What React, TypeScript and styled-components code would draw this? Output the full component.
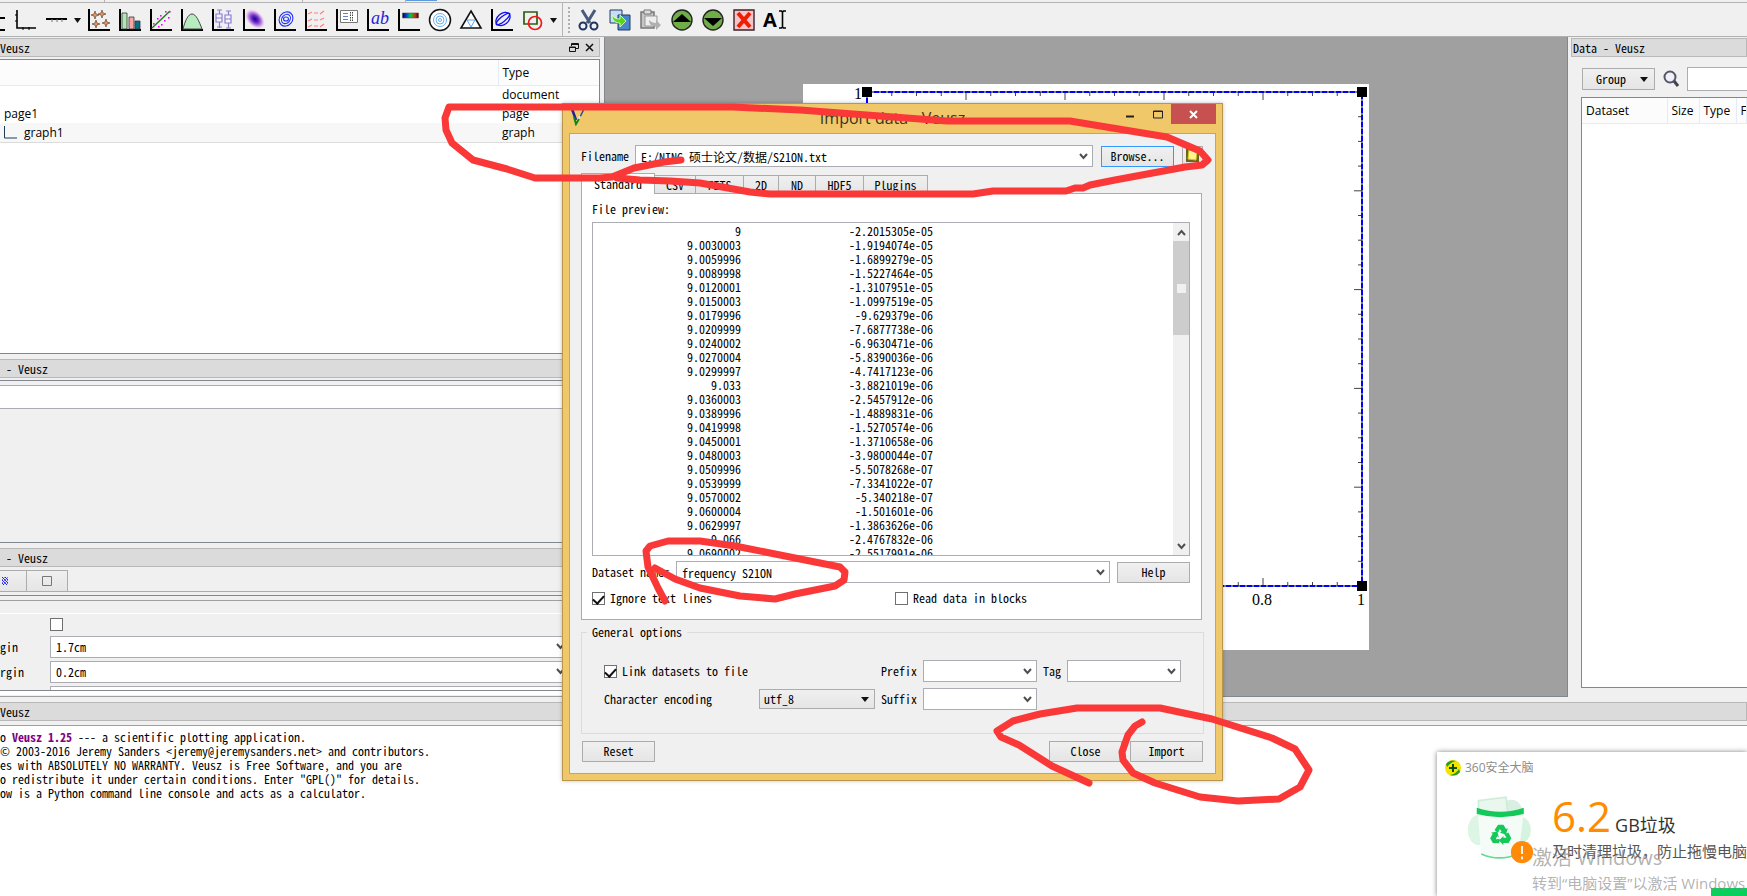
import React from "react";
import styled, { createGlobalStyle } from "styled-components";

const mono = `"Noto Sans Mono CJK SC", "Liberation Mono", "Noto Sans CJK SC", monospace`;
const sans = `"Open Sans", "Noto Sans CJK SC", sans-serif`;

const GlobalStyle = createGlobalStyle`
  * { box-sizing: border-box; }
  body { margin: 0; background: #f0f0f0; overflow: hidden; }
  button, input, select, textarea { font: inherit; color: inherit; margin: 0; }
`;

const Desktop = styled.div`
  position: relative;
  display: flex;
  flex-direction: column;
  height: 100vh;
  overflow: hidden;
  background: #f0f0f0;
  color: #000;
  font: 12px/14px ${mono};
`;

/* ---------- toolbar ---------- */

const MenuEdge = styled.div`
  display: flex;
  height: 3px;
  border-bottom: 1px solid #b4b4b4;
`;
const MenuSegment = styled.span<{ $w: number; $active?: boolean }>`
  width: ${(p) => p.$w}px;
  height: ${(p) => (p.$active ? 1 : 2)}px;
  border-right: 1px solid ${(p) => (p.$active ? "transparent" : "#b4b4b4")};
  background: ${(p) => (p.$active ? "#5a9be0" : "transparent")};
`;
const ToolBar = styled.div`
  display: flex;
  align-items: center;
  height: 34px;
  border-bottom: 1px solid #b0b0b0;
`;
const ToolGroup = styled.div<{ $w?: number }>`
  display: flex;
  align-items: center;
  width: ${(p) => (p.$w ? `${p.$w}px` : "auto")};
  height: 33px;
  padding-left: ${(p) => (p.$w ? 0 : 8)}px;
  border-right: ${(p) => (p.$w ? "1px solid #b4b4b4" : "none")};
`;
const ToolButton = styled.button<{ $w?: number }>`
  flex: none;
  display: flex;
  width: ${(p) => p.$w ?? 31}px;
  height: 24px;
  padding: 1px 0;
  border: 0;
  background: none;
  svg { flex: none; overflow: visible; }
`;
const Grip = styled.span`
  width: 2px;
  height: 26px;
  margin-left: 5px;
  background: repeating-linear-gradient(#b0b0b0 0 2px, transparent 2px 4px);
`;

/* ---------- main area ---------- */

const Main = styled.div`
  flex: 1;
  min-height: 0;
  display: flex;
  padding-bottom: 5px;
`;
const LeftColumn = styled.div`
  flex: none;
  display: flex;
  flex-direction: column;
  width: 600px;
  padding-top: 1px;
`;
const DockTitle = styled.div<{ $inset?: number }>`
  flex: none;
  display: flex;
  align-items: center;
  justify-content: space-between;
  height: 19px;
  padding: 0 4px 0 ${(p) => p.$inset ?? 0}px;
  border: 1px solid #b8b8b8;
  border-left-width: ${(p) => (p.$inset === 1 ? 1 : 0)}px;
  background: #dbdbdb;
  white-space: pre;
`;
const DockButtons = styled.span`
  display: flex;
  gap: 6px;
`;
const TinyButton = styled.button`
  display: flex;
  padding: 0;
  border: 0;
  background: none;
`;
const TreeFrame = styled.div`
  flex: 293 1 0;
  margin: 2px 0 5px;
  border: 1px solid #828790;
  border-left: 0;
  background: #fff;
  font: 12px/18px ${sans};
`;
const Tree = styled.table`
  width: 100%;
  border-collapse: collapse;
  table-layout: fixed;
  th { height: 25px; padding: 1px 4px 0; text-align: left; font-weight: 400; background: #fcfcfc;
       border-bottom: 1px solid #e3edf9; }
  th + th { border-left: 1px solid #e3edf9; }
  td { height: 19px; padding: 0 4px; }
  td:first-child { width: 498px; }
`;
const TreeRow = styled.tr<{ $on?: boolean }>`
  td {
    background: ${(p) => (p.$on ? "#f7f7f7" : "transparent")};
    border-top: 1px solid ${(p) => (p.$on ? "#dcdcdc" : "transparent")};
    border-bottom: 1px solid ${(p) => (p.$on ? "#dcdcdc" : "transparent")};
  }
`;
const TreeLabel = styled.span`
  display: flex;
  align-items: center;
  gap: 7px;
`;
const PropFrame = styled.div`
  flex: 157 1 0;
  margin: 2px 0 5px;
  padding-top: 4px;
  border: 1px solid #828790;
  border-left: 0;
`;
const PlainInput = styled.input`
  display: block;
  width: 100%;
  height: 24px;
  border: 1px solid #abadb3;
  border-left: 0;
  background: #fff;
`;
const FormatFrame = styled.div`
  flex: 126 1 0;
  min-height: 0;
  display: flex;
  flex-direction: column;
  padding-top: 3px;
  border-bottom: 1px solid #a0a0a0;
`;
const SmallTabs = styled.div`
  display: flex;
  height: 22px;
  border-bottom: 1px solid #acacac;
`;
const SmallTab = styled.button<{ $w: number }>`
  display: flex;
  align-items: center;
  justify-content: center;
  width: ${(p) => p.$w}px;
  padding: 0;
  border: 1px solid #acacac;
  border-width: 1px 1px 0 0;
  background: linear-gradient(#f0f0f0, #e5e5e5);
`;
const SettingsFrame = styled.div`
  flex: 1;
  min-height: 0;
  margin: 3px 0 5px;
  padding-top: 4px;
  overflow: hidden;
  border: 1px solid #828790;
  border-left: 0;
  box-shadow: 0 4px 0 #fff;
`;
const SettingsHead = styled.div`
  height: 14px;
  border-top: 1px solid #a0a0a0;
  border-bottom: 1px solid #fff;
`;
const SettingsRow = styled.div<{ $h?: number }>`
  display: grid;
  grid-template-columns: 50px 1fr;
  align-items: center;
  height: ${(p) => p.$h ?? 25}px;
`;

const CanvasArea = styled.div`
  flex: 1;
  min-width: 0;
  display: flex;
  align-items: center;
  justify-content: center;
  margin: 0 0 0 4px;
  border: 1px solid #828790;
  border-top-width: 0;
  background: #a0a0a0;
`;
const Chart = styled.svg`
  flex: none;
  display: block;
  background: #fff;
`;

const DataDock = styled.div`
  flex: none;
  display: flex;
  flex-direction: column;
  width: 176px;
  margin-left: 3px;
  padding-top: 1px;
  overflow: hidden;
`;
const DataTools = styled.div`
  display: flex;
  align-items: center;
  gap: 8px;
  height: 24px;
  margin: 10px 0 6px 11px;
`;
const GroupButton = styled.button`
  flex: none;
  display: flex;
  align-items: center;
  justify-content: space-between;
  width: 73px;
  height: 22px;
  padding: 0 5px 0 13px;
  border: 1px solid #acacac;
  background: linear-gradient(#f0f0f0, #e5e5e5);
`;
const SearchInput = styled.input`
  flex: 1;
  min-width: 0;
  height: 24px;
  border: 1px solid #abadb3;
  border-right: 0;
  background: #fff;
`;
const DataFrame = styled.div`
  flex: 1;
  margin: 0 0 9px 10px;
  border: 1px solid #828790;
  border-right: 0;
  background: #fff;
  font: 12px/18px ${sans};
`;
const DataTable = styled.table`
  width: 165px;
  border-collapse: collapse;
  table-layout: fixed;
  th { height: 25px; padding: 1px 4px 0; text-align: left; font-weight: 400; white-space: nowrap; overflow: hidden;
       background: #fcfcfc; border: 1px solid #e3edf9; border-width: 0 1px 1px 0; }
`;

/* ---------- console ---------- */

const ConsoleDock = styled.div`
  flex: none;
  height: 194px;
  display: flex;
  flex-direction: column;
`;
const ConsoleText = styled.pre`
  flex: 1;
  margin: 4px 0 0;
  padding: 4px 0;
  border-top: 1px solid #a0a0a0;
  background: #fff;
  font: 12px/14px ${mono};
  b { color: #800080; }
`;

/* ---------- dialog ---------- */

const Dialog = styled.section`
  position: absolute;
  isolation: isolate;
  left: 562px;
  top: 103px;
  width: 661px;
  padding: 0 6px 6px;
  border: 1px solid #b8964c;
  background: #f0c869;
  box-shadow: 0 0 4px rgba(0, 0, 0, 0.25);
`;
const TitleBar = styled.header`
  display: grid;
  grid-template-columns: 126px 1fr 126px;
  height: 29px;
`;
const DialogTitle = styled.h1`
  margin: 0;
  color: #3a3424;
  font: 400 16px/28px ${sans};
  text-align: center;
`;
const WindowButtons = styled.div`
  display: flex;
  justify-content: flex-end;
`;
const WindowButton = styled.button<{ $close?: boolean }>`
  display: flex;
  align-items: center;
  justify-content: center;
  width: ${(p) => (p.$close ? 45 : 27)}px;
  height: 20px;
  padding: 0;
  border: 0;
  background: ${(p) => (p.$close ? "#c75050" : "transparent")};
`;
const Body = styled.div`
  padding: 11px;
  border: 1px solid #c8a656;
  background: #f0f0f0;
`;
const FileRow = styled.div`
  display: flex;
  align-items: center;
  gap: 8px;
  height: 22px;
  padding-right: 1px;
  label { width: 46px; white-space: nowrap; }
`;
const ComboFrame = styled.span<{ $w?: number }>`
  flex: ${(p) => (p.$w ? "none" : "1")};
  display: flex;
  align-items: center;
  width: ${(p) => (p.$w ? `${p.$w}px` : "auto")};
  height: 22px;
  padding: 0 4px 0 5px;
  border: 1px solid #abadb3;
  background: #fff;
  input {
    flex: 1;
    min-width: 0;
    height: 20px;
    padding: 0;
    border: 0;
    outline: 0;
    background: none;
  }
`;
const PushButton = styled.button<{ $focus?: boolean; $square?: boolean }>`
  flex: none;
  display: flex;
  align-items: center;
  justify-content: center;
  width: ${(p) => (p.$square ? 21 : 73)}px;
  height: 21px;
  padding: 0 0 1px;
  border: 1px solid ${(p) => (p.$focus ? "#3399ff" : "#acacac")};
  background: linear-gradient(#f0f0f0, #e5e5e5);
`;
const Tabs = styled.div`
  display: flex;
  align-items: flex-end;
  height: 20px;
  margin-top: 6px;
`;
const Tab = styled.button<{ $w: number; $on?: boolean }>`
  position: relative;
  z-index: ${(p) => (p.$on ? 1 : 0)};
  width: ${(p) => p.$w}px;
  height: ${(p) => (p.$on ? 21 : 18)}px;
  margin-bottom: ${(p) => (p.$on ? -1 : 0)}px;
  padding: 0;
  border: 1px solid #acacac;
  border-bottom: 0;
  border-left-width: ${(p) => (p.$on ? 1 : 0)}px;
  background: ${(p) => (p.$on ? "#fff" : "linear-gradient(#f0f0f0, #e5e5e5)")};
`;
const Pane = styled.div`
  margin-right: 2px;
  height: 427px;
  padding: 8px 11px 11px 10px;
  border: 1px solid #acacac;
  background: #fff;
`;
const Preview = styled.div`
  display: flex;
  height: 334px;
  margin: 6px 0 5px;
  border: 1px solid #abadb3;
`;
const PreviewText = styled.div`
  flex: 1;
  overflow: hidden;
  padding-top: 1px;
`;
const Numbers = styled.table`
  border-collapse: collapse;
  td { height: 14px; padding: 0; text-align: right; line-height: 14px; }
  td:first-child { width: 148px; }
  td:last-child { width: 192px; }
`;
const ScrollBar = styled.div`
  display: flex;
  flex-direction: column;
  align-items: center;
  width: 16px;
  background: #f0f0f0;
`;
const ScrollArrow = styled.span`
  display: flex;
  align-items: center;
  justify-content: center;
  height: 18px;
`;
const ScrollThumb = styled.span`
  display: flex;
  align-items: center;
  justify-content: center;
  width: 16px;
  height: 94px;
  margin-bottom: auto;
  background: #cdcdcd;
  &::after { content: ""; width: 9px; height: 9px; background: #f0f0f0; }
`;
const DatasetRow = styled.div`
  display: grid;
  grid-template-columns: 77px 1fr 73px;
  align-items: center;
  column-gap: 7px;
  white-space: nowrap;
`;
const CheckRow = styled.div`
  display: grid;
  grid-template-columns: 303px 1fr;
  margin-top: 8px;
`;
const CheckLabel = styled.label<{ $wide?: boolean }>`
  display: flex;
  align-items: center;
  gap: 5px;
  grid-column: ${(p) => (p.$wide ? "span 2" : "auto")};
`;
const Check = styled.input`
  appearance: none;
  flex: none;
  display: flex;
  justify-content: center;
  width: 13px;
  height: 13px;
  border: 1px solid #707070;
  background: #fff;
  &:checked::after {
    content: "";
    width: 5px;
    height: 9px;
    border: solid #111;
    border-width: 0 2px 2px 0;
    transform: rotate(42deg);
  }
`;
const Options = styled.fieldset`
  height: 109px;
  min-width: 0;
  margin: 5px 0 0;
  padding: 18px 22px 0 22px;
  border: 1px solid #dcdcdc;
  legend { margin-left: -17px; padding: 0 5px; }
`;
const OptionRow = styled.div`
  display: grid;
  grid-template-columns: 149px 116px 36px 114px 18px 114px;
  align-items: center;
  column-gap: 6px;
  height: 28px;
`;
const SelectFrame = styled.span`
  position: relative;
  display: flex;
  align-items: center;
  svg { position: absolute; right: 5px; pointer-events: none; }
`;
const FlatSelect = styled.select`
  appearance: none;
  width: 100%;
  height: 20px;
  padding: 0 4px;
  border: 1px solid #acacac;
  border-radius: 0;
  background: linear-gradient(#f0f0f0, #e5e5e5);
`;
const Footer = styled.div`
  display: flex;
  gap: 8px;
  margin: 7px 1px 0;
  button:first-child { margin-right: auto; }
`;

/* ---------- notification ---------- */

const Notice = styled.aside`
  position: absolute;
  left: 1437px;
  right: 0;
  top: 752px;
  bottom: 0;
  overflow: hidden;
  background: #fff;
  box-shadow: 0 0 5px rgba(0, 0, 0, 0.5);
  font-family: ${sans};
  white-space: nowrap;
`;
const NoticeHead = styled.div`
  display: flex;
  align-items: center;
  gap: 4px;
  padding: 8px 8px 0;
  color: #8c8c8c;
  font-size: 12px;
  line-height: 16px;
`;
const NoticeBody = styled.div`
  display: flex;
  gap: 14px;
  padding: 12px 0 0 30px;
`;
const Amount = styled.p`
  display: flex;
  align-items: baseline;
  gap: 4px;
  margin: 0;
  color: #333;
  font-size: 18px;
  line-height: 56px;
  strong { color: #ff8c00; font-weight: 400; font-size: 42px; }
`;
const Advice = styled.p`
  margin: -13px 0 0;
  color: #555;
  font-size: 15px;
  line-height: 22px;
`;
const CleanButton = styled.button`
  position: absolute;
  left: 274px;
  top: 136px;
  width: 90px;
  height: 28px;
  border: 0;
  background: #0bcf5c;
`;
const Watermark = styled.div`
  position: absolute;
  left: 1532px;
  top: 843px;
  color: rgba(130, 130, 130, 0.62);
  font: 15px/20px ${sans};
  white-space: nowrap;
  strong { display: block; font-weight: 400; font-size: 20px; line-height: 30px; }
`;
const Marker = styled.svg`
  position: absolute;
  left: 0;
  top: 0;
  pointer-events: none;
`;

/* ---------- icons ---------- */

const frame = <path d="M1 0V21H22" fill="none" stroke="#000" strokeWidth="2" />;
const star = "M0-4L1-1L4 0L1 1L0 4L-1 1L-4 0L-1-1Z";

const plotIcons: [string, React.ReactNode][] = [
  ["Points", <>{frame}{[[7, 6], [14, 5], [8, 15], [18, 14]].map(([x, y]) => (
    <path key={x} d={star} transform={`translate(${x} ${y})`} fill="#e8905c" stroke="#6a4a3c" strokeWidth=".7" />))}</>],
  ["Bars", <>{frame}<g stroke="#333" strokeWidth=".8"><path d="M3 4h5v16H3z" fill="#b4e6b4" /><path d="M10 8h5v12h-5z" fill="#f9a6a6" /><path d="M16 12h5v8h-5z" fill="#0a6f86" /></g></>],
  ["Fit", <>{frame}<path d="M2 19L20 2" stroke="#1d7d1d" strokeWidth="1.4" />{[[3, 14], [7, 9], [10, 6], [15, 2], [8, 17], [11, 15], [14, 11], [18, 8], [19, 2]].map(([x, y]) => (
    <rect key={`${x}-${y}`} x={x} y={y} width="1.600" height="1.600" fill="#f0f" />))}</>],
  ["Function", <>{frame}<path d="M2 20C4 12 7 5 11 5s7 7 10 15z" fill="#b9ebc0" stroke="#444" /></>],
  ["Boxplot", <>{frame}<g fill="#f4f2ff" stroke="#8a7fd0" strokeWidth="1.2"><path d="M5 1h5M7.500 1v18M5 18h5M14 2h5M16.500 2v17M14 19h5" /><path d="M4 5h6v8H4zM13 6h6v8h-6zM4 9h6M13 10h6" /></g></>],
  ["Image", <>{frame}<defs><radialGradient id="blob"><stop offset="0" stopColor="#1a0099" /><stop offset=".35" stopColor="#6a2cc4" /><stop offset=".7" stopColor="#cf9be8" /><stop offset="1" stopColor="#f0dcf8" stopOpacity="0" /></radialGradient></defs><ellipse cx="12" cy="10" rx="12" ry="8" transform="rotate(45 12 10)" fill="url(#blob)" /></>],
  ["Contour", <>{frame}<g fill="none" stroke="#2030ff" strokeWidth="1.1"><ellipse cx="12" cy="10" rx="7.500" ry="6.500" transform="rotate(-50 12 10)" /><ellipse cx="12" cy="10" rx="5" ry="4" transform="rotate(-50 12 10)" /><ellipse cx="12" cy="10" rx="2.500" ry="2" /></g></>],
  ["Vector field", <>{frame}<path d="M3 5l4-2M9 4h4M15 5l4-3M3 12l4-2M9 11h4M15 11l4-2M3 18l4-2M9 17h4M15 18l4-3" stroke="#ff8080" strokeWidth="1.2" /></>],
  ["Key", <>{frame}<path d="M4.500 1.500h17v12h-17z" fill="#fff" stroke="#777" /><path d="M7 4.500h5M7 7.500h5M7 10.500h5" stroke="#6080d0" /><path d="M14.500 3v9M16.500 3v9" stroke="#444" strokeDasharray="1.500 1" /></>],
  ["Label", <>{frame}<text x="4" y="15" fill="#2a20d8" fontFamily="Liberation Serif, serif" fontStyle="italic" fontSize="18">ab</text></>],
  ["Colorbar", <>{frame}<defs><linearGradient id="rain"><stop offset="0" stopColor="#003" /><stop offset=".25" stopColor="#04d" /><stop offset=".5" stopColor="#0c4" /><stop offset=".8" stopColor="#d20" /><stop offset="1" stopColor="#300" /></linearGradient></defs><path d="M4.500 4h16v5h-16z" fill="url(#rain)" stroke="#555" strokeWidth=".6" /></>],
  ["Polar", <g fill="none"><circle cx="11" cy="11" r="10.500" fill="#fff" stroke="#111" strokeWidth="1.500" /><g stroke="#6bb0ee"><circle cx="11" cy="11" r="6.500" /><circle cx="11" cy="11" r="4" /><circle cx="11" cy="11" r="1.500" /></g></g>],
  ["Ternary", <g fill="none"><path d="M11 2L21 19H1z" fill="#fff" stroke="#111" strokeWidth="1.600" /><path d="M7 11h8l-4 7z" stroke="#5aa0f0" /></g>],
  ["Covariance", <>{frame}<g fill="none" stroke="#1010f0" strokeWidth="1.300"><ellipse cx="12" cy="10" rx="8" ry="5.500" transform="rotate(-40 12 10)" /><ellipse cx="12" cy="10" rx="8.500" ry="2.500" transform="rotate(-40 12 10)" /></g></>],
  ["Shape", <g fill="none" strokeWidth="1.700"><path d="M2 3h13v12H2z" stroke="#286010" /><circle cx="13" cy="14" r="6.500" stroke="#f01818" /></g>],
];

const editIcons: [string, React.ReactNode][] = [
  ["Cut", <g fill="none"><path d="M4 1l8 13M17 1L9 14" stroke="#47597c" strokeWidth="3" /><circle cx="5" cy="17" r="3.500" stroke="#1e3560" strokeWidth="2" /><circle cx="16" cy="17" r="3.500" stroke="#1e3560" strokeWidth="2" /></g>],
  ["Copy", <><path d="M1 1h12v13H1z" fill="#c9dcf2" stroke="#1f3c68" /><path d="M9 6h12v15H9z" fill="#4a86c8" stroke="#1f3c68" /><path d="M3 6c0 6 4 8 8 8v4l6-6-6-6v4c-4 0-6-1-8-4z" fill="#56d618" stroke="#e8ffe0" strokeWidth=".8" /></>],
  ["Paste", <><path d="M1 3h13v16H1z" fill="#c4c4c4" stroke="#777" strokeWidth="1.500" /><path d="M4 1h7v4H4z" fill="#ddd" stroke="#777" /><path d="M5 7h12v10H5z" fill="#eee" stroke="#999" /><path d="M9 11c0 5 3 6 7 6v4l5-5-5-5v3c-3 0-5-1-7-3z" fill="#b0b0b0" /></>],
  ["Move up", <><circle cx="11" cy="11" r="10" fill="#70ad47" stroke="#222" strokeWidth="1.400" /><path d="M11 5L20 13H2z" /></>],
  ["Move down", <><circle cx="11" cy="11" r="10" fill="#70ad47" stroke="#222" strokeWidth="1.400" /><path d="M11 17L20 9H2z" /></>],
  ["Delete", <><path d="M1 1h20v20H1z" fill="#f8c4cc" stroke="#3a2226" strokeWidth="1.400" /><path d="M5 4l12 14M17 4L5 18" stroke="#ee1c00" strokeWidth="4" /></>],
  ["Rename", <><text x="-1" y="18" fontFamily="Open Sans, sans-serif" fontWeight="700" fontSize="20">A</text><path d="M15 2h2.500l1 1 1-1H22M18.500 3v15M15 19h2.500l1-1 1 1H22" fill="none" stroke="#000" strokeWidth="1.600" /></>],
];

const Icon = ({ children }: { children: React.ReactNode }) => (
  <svg width="22" height="22" viewBox="0 0 22 22" aria-hidden="true">{children}</svg>
);
const Arrow = () => (
  <svg width="9" height="5" viewBox="0 0 9 5" aria-hidden="true"><path d="M0 0h8L4 5z" fill="#111" /></svg>
);
const Chevron = ({ up }: { up?: boolean }) => (
  <svg width="9" height="7" viewBox="0 0 9 7" aria-hidden="true">
    <path d={up ? "M1 6l3.500-4L8 6" : "M1 1l3.500 4L8 1"} fill="none" stroke="#505050" strokeWidth="2" />
  </svg>
);

const Combo = ({ id, value, w, label }: { id: string; value?: string; w?: number; label?: string }) => (
  <ComboFrame $w={w}>
    <input id={id} defaultValue={value} aria-label={label} />
    <TinyButton type="button" aria-label="Show choices"><Chevron /></TinyButton>
  </ComboFrame>
);

/* ---------- data ---------- */

const samples = [
  ["9", "-2.2015305e-05"], ["9.0030003", "-1.9194074e-05"], ["9.0059996", "-1.6899279e-05"],
  ["9.0089998", "-1.5227464e-05"], ["9.0120001", "-1.3107951e-05"], ["9.0150003", "-1.0997519e-05"],
  ["9.0179996", "-9.629379e-06"], ["9.0209999", "-7.6877738e-06"], ["9.0240002", "-6.9630471e-06"],
  ["9.0270004", "-5.8390036e-06"], ["9.0299997", "-4.7417123e-06"], ["9.033", "-3.8821019e-06"],
  ["9.0360003", "-2.5457912e-06"], ["9.0389996", "-1.4889831e-06"], ["9.0419998", "-1.5270574e-06"],
  ["9.0450001", "-1.3710658e-06"], ["9.0480003", "-3.9800044e-07"], ["9.0509996", "-5.5078268e-07"],
  ["9.0539999", "-7.3341022e-07"], ["9.0570002", "-5.340218e-07"], ["9.0600004", "-1.501601e-06"],
  ["9.0629997", "-1.3863626e-06"], ["9.066", "-2.4767832e-06"], ["9.0690002", "-2.5517991e-06"],
];
const fileTabs: [string, number][] = [
  ["Standard", 74], ["CSV", 41], ["FITS", 48], ["2D", 35], ["ND", 37], ["HDF5", 48], ["Plugins", 64],
];

const left = 64, right = 559, top = 8, bottom = 502;
const ticks = Array.from({ length: 19 }, (_, i) => i + 1).map((i) => {
  const len = i % 4 === 0 ? 8 : 4;
  const x = left + ((right - left) * i) / 20;
  const y = top + ((bottom - top) * i) / 20;
  return `M${x} ${top}v${len}M${x} ${bottom}v${-len}M${left} ${y}h${len}M${right} ${y}h${-len}`;
}).join("");

const Plot = () => (
  <Chart width="566" height="566" viewBox="0 0 566 566">
    <path d={ticks} stroke="#444" />
    <path d={`M${left} ${top}H${right}V${bottom}H${left}Z`} fill="none" stroke="#000" />
    <path d={`M${left} ${top}H${right}V${bottom}H${left}Z`} fill="none" stroke="#00f" strokeWidth="2" strokeDasharray="5 2" />
    {[[left, top], [right, top], [right, bottom]].map(([x, y]) => (
      <rect key={`${x}-${y}`} x={x - 5} y={y - 5} width="10" height="10" />
    ))}
    <g fontFamily="Liberation Serif, serif" fontSize="16">
      <text x="59" y="15" textAnchor="end">1</text>
      <text x="459" y="521" textAnchor="middle">0.8</text>
      <text x="558" y="521" textAnchor="middle">1</text>
    </g>
  </Chart>
);

const ImportDialog = () => (
  <Dialog role="dialog" aria-label="Import data">
    <TitleBar>
      <svg width="18" height="22" viewBox="0 0 18 22" aria-hidden="true">
        <path d="M3 5l4 11" stroke="#2020a0" strokeWidth="2.500" /><path d="M15 5l-4 8" stroke="#334a90" strokeWidth="1.500" />
        <path d="M11 12l-3 6" stroke="#e8e8d8" strokeWidth="2" /><path d="M5 13l2 7 3-5" fill="none" stroke="#108818" strokeWidth="2" />
      </svg>
      <DialogTitle>Import data - Veusz</DialogTitle>
      <WindowButtons>
        <WindowButton aria-label="Minimize"><svg width="9" height="8"><path d="M0 6.500h8" stroke="#222" strokeWidth="2" /></svg></WindowButton>
        <WindowButton aria-label="Maximize"><svg width="10" height="9"><path d="M.5 1v7h9V1zM0 1.500h10" fill="none" stroke="#222" /></svg></WindowButton>
        <WindowButton $close aria-label="Close window"><svg width="9" height="9"><path d="M1 1l7 7M8 1L1 8" stroke="#fff" strokeWidth="2" /></svg></WindowButton>
      </WindowButtons>
    </TitleBar>
    <Body>
      <FileRow>
        <label htmlFor="file">Filename</label>
        <Combo id="file" value="E:/NING 硕士论文/数据/S21ON.txt" />
        <PushButton $focus>Browse...</PushButton>
        <PushButton $square aria-label="Paste from clipboard">
          <svg width="13" height="15" viewBox="0 0 13 15"><path d="M0 1h13v13H0z" fill="#6a6420" /><path d="M3 2l8 1-1 9-8-1z" fill="#fff490" stroke="#d8c820" /></svg>
        </PushButton>
      </FileRow>
      <Tabs role="tablist">
        {fileTabs.map(([name, w], i) => (
          <Tab key={name} role="tab" aria-selected={i === 0} $w={w} $on={i === 0}>{name}</Tab>
        ))}
      </Tabs>
      <Pane role="tabpanel">
        <div>File preview:</div>
        <Preview>
          <PreviewText>
            <Numbers>
              <tbody>{samples.map(([a, b]) => <tr key={a}><td>{a}</td><td>{b}</td></tr>)}</tbody>
            </Numbers>
          </PreviewText>
          <ScrollBar>
            <ScrollArrow><Chevron up /></ScrollArrow>
            <ScrollThumb />
            <ScrollArrow><Chevron /></ScrollArrow>
          </ScrollBar>
        </Preview>
        <DatasetRow>
          <label htmlFor="names">Dataset names</label>
          <Combo id="names" value="frequency S21ON" />
          <PushButton>Help</PushButton>
        </DatasetRow>
        <CheckRow>
          <CheckLabel><Check type="checkbox" defaultChecked />Ignore text lines</CheckLabel>
          <CheckLabel><Check type="checkbox" />Read data in blocks</CheckLabel>
        </CheckRow>
      </Pane>
      <Options>
        <legend>General options</legend>
        <OptionRow>
          <CheckLabel $wide><Check type="checkbox" defaultChecked />Link datasets to file</CheckLabel>
          <label htmlFor="prefix">Prefix</label>
          <Combo id="prefix" w={114} />
          <label htmlFor="tag">Tag</label>
          <Combo id="tag" w={114} />
        </OptionRow>
        <OptionRow>
          <label htmlFor="encoding">Character encoding</label>
          <SelectFrame><FlatSelect id="encoding"><option>utf_8</option></FlatSelect><Arrow /></SelectFrame>
          <label htmlFor="suffix">Suffix</label>
          <Combo id="suffix" w={114} />
        </OptionRow>
      </Options>
      <Footer>
        <PushButton>Reset</PushButton>
        <PushButton>Close</PushButton>
        <PushButton>Import</PushButton>
      </Footer>
    </Body>
  </Dialog>
);

const Bin = () => (
  <svg width="80" height="84" viewBox="0 0 80 84" aria-hidden="true">
    <ellipse cx="13" cy="42" rx="12" ry="17" fill="#dcf5e5" /><ellipse cx="62" cy="42" rx="10" ry="14" fill="#d5f3e0" />
    <circle cx="50" cy="20" r="12" fill="#d9efe2" />
    <path d="M13 9l31-4 2 20-33 2z" fill="#eaf7ef" stroke="#cfeeda" strokeWidth="2" />
    <path d="M12 22h52l-6 48q-20 9-42 0z" fill="#f5fcf8" />
    <path d="M11 17q27 9 53 0v7q-27 7-53 0z" fill="#14c95a" />
    <path d="M16 69q20 9 42 0" fill="none" stroke="#5fdc90" strokeWidth="2" />
    <g fill="#14c95a">
      {[0, 120, 240].map((a) => (
        <g key={a} transform={`rotate(${a} 38 48)`}>
          <path d="M31 42l4-6h6l3 5 2-1-2 7-7-2 2-1-2-3-2 4z" />
        </g>
      ))}
    </g>
    <circle cx="62" cy="67" r="12.500" fill="#ff8a0a" /><path d="M62 60v9M62 72v3" stroke="#fff" strokeWidth="2" />
  </svg>
);

export default function App() {
  return (
    <>
      <GlobalStyle />
      <Desktop>
        <MenuEdge>
          <MenuSegment $w={105} />
          <MenuSegment $w={198} />
          <MenuSegment $w={103} />
          <MenuSegment $w={31} $active />
        </MenuEdge>
        <ToolBar>
          <ToolGroup $w={563}>
            <ToolButton $w={15} aria-label="Grid"><svg width="6" height="22"><path d="M0 9h5M0 21h5" stroke="#000" strokeWidth="2" /></svg></ToolButton>
            <ToolButton aria-label="Graph"><Icon><path d="M2 1v18h19" fill="none" stroke="#000" strokeWidth="1.600" /><path d="M0 6h2M0 12h2M8 21v-3M14 21v-3" stroke="#000" /></Icon></ToolButton>
            <ToolButton $w={28} aria-label="Axis"><Icon><path d="M0 10h21" stroke="#000" strokeWidth="2" /><path d="M6 13v-3M11 13v-3M16 13v-3" stroke="#777" /></Icon></ToolButton>
            <ToolButton $w={14} aria-label="Axis types"><svg width="8" height="22"><path d="M0 9h7l-3.500 5z" fill="#111" /></svg></ToolButton>
            {plotIcons.map(([name, art]) => <ToolButton key={name} $w={name === "Shape" ? 28 : 31} aria-label={name}><Icon>{art}</Icon></ToolButton>)}
            <ToolButton $w={10} aria-label="Shape types"><svg width="8" height="22"><path d="M0 9h7l-3.500 5z" fill="#111" /></svg></ToolButton>
          </ToolGroup>
          <Grip />
          <ToolGroup>
            {editIcons.map(([name, art]) => <ToolButton key={name} aria-label={name}><Icon>{art}</Icon></ToolButton>)}
          </ToolGroup>
        </ToolBar>

        <Main>
          <LeftColumn>
            <DockTitle>
              Veusz
              <DockButtons>
                <TinyButton aria-label="Float"><svg width="10" height="10"><path d="M2.500 3V.5h7v5H7M2 1.500h8M.5 4v4.500h6V4zM0 4.500h7" fill="none" stroke="#111" /></svg></TinyButton>
                <TinyButton aria-label="Close panel"><svg width="10" height="10"><path d="M1 1l7 7M8 1L1 8" stroke="#111" strokeWidth="1.500" /></svg></TinyButton>
              </DockButtons>
            </DockTitle>
            <TreeFrame>
              <Tree>
                <colgroup><col width="498" /><col /></colgroup>
                <thead><tr><th /><th>Type</th></tr></thead>
                <tbody>
                  <TreeRow><td /><td>document</td></TreeRow>
                  <TreeRow><td>page1</td><td>page</td></TreeRow>
                  <TreeRow $on>
                    <td><TreeLabel><svg width="13" height="13"><path d="M.5 0v12H13" fill="none" stroke="#1d3c58" /></svg>graph1</TreeLabel></td>
                    <td>graph</td>
                  </TreeRow>
                </tbody>
              </Tree>
            </TreeFrame>
            <DockTitle $inset={6}>- Veusz</DockTitle>
            <PropFrame><PlainInput aria-label="Property" /></PropFrame>
            <DockTitle $inset={6}>- Veusz</DockTitle>
            <FormatFrame>
              <SmallTabs>
                <SmallTab $w={27} aria-label="Fill"><svg width="22" height="9"><path d="M0 0l6 6M0 3l5 5M0 6l2 2M3 0l3 3" stroke="#22f" /><path d="M0 3l3-3M0 6l6-6M1 8l5-5M4 8l2-2" stroke="#22f" strokeWidth=".6" /></svg></SmallTab>
                <SmallTab $w={41} aria-label="Border"><svg width="10" height="10"><path d="M.5.5h9v9h-9z" fill="none" stroke="#777" /></svg></SmallTab>
              </SmallTabs>
              <SettingsFrame>
                <SettingsHead />
                <SettingsRow $h={20}><span /><Check type="checkbox" aria-label="Hide" /></SettingsRow>
                <SettingsRow><label htmlFor="m1">gin</label><Combo id="m1" value="1.7cm" w={520} /></SettingsRow>
                <SettingsRow><label htmlFor="m2">rgin</label><Combo id="m2" value="0.2cm" w={520} /></SettingsRow>
                <SettingsRow><span /><Combo id="m3" label="Margin" w={520} /></SettingsRow>
              </SettingsFrame>
            </FormatFrame>
          </LeftColumn>
          <CanvasArea><Plot /></CanvasArea>
          <DataDock>
            <DockTitle $inset={1}>Data - Veusz</DockTitle>
            <DataTools>
              <GroupButton>Group<Arrow /></GroupButton>
              <svg width="16" height="18" viewBox="0 0 16 18" aria-hidden="true"><circle cx="7" cy="7" r="5.500" fill="#eef2f8" stroke="#55556a" strokeWidth="2" /><path d="M11 11l4 5" stroke="#44444f" strokeWidth="3" /></svg>
              <SearchInput aria-label="Search" />
            </DataTools>
            <DataFrame>
              <DataTable>
                <colgroup><col width="85" /><col width="32" /><col width="37" /><col /></colgroup>
                <thead><tr><th>Dataset</th><th>Size</th><th>Type</th><th>F</th></tr></thead>
              </DataTable>
            </DataFrame>
          </DataDock>
        </Main>

        <ConsoleDock>
          <DockTitle>Veusz</DockTitle>
          <ConsoleText>
            {"o "}<b>Veusz 1.25</b>{" --- a scientific plotting application.\n"}
            {"© 2003-2016 Jeremy Sanders <jeremy@jeremysanders.net> and contributors.\n"}
            {"es with ABSOLUTELY NO WARRANTY. Veusz is Free Software, and you are\n"}
            {"o redistribute it under certain conditions. Enter \"GPL()\" for details.\n"}
            {"ow is a Python command line console and acts as a calculator."}
          </ConsoleText>
        </ConsoleDock>

        <ImportDialog />

        <Notice>
          <NoticeHead>
            <svg width="16" height="16" viewBox="0 0 16 16" aria-hidden="true"><circle cx="8" cy="8" r="8" fill="#f4e400" /><path d="M1 4Q5-1 11 1Q6 2 2 7zM15 12q-4 5-10 3q6-1 9-6z" fill="#2c9a20" /><path d="M8 4v8M4 8h8" stroke="#0a5010" strokeWidth="2" /></svg>
            360安全大脑
          </NoticeHead>
          <NoticeBody>
            <Bin />
            <div>
              <Amount><strong>6.2</strong>GB垃圾</Amount>
              <Advice>及时清理垃圾，防止拖慢电脑</Advice>
            </div>
          </NoticeBody>
          <CleanButton aria-label="Clean now" />
        </Notice>
        <Watermark><strong>激活 Windows</strong>转到“电脑设置”以激活 Windows</Watermark>

        <Marker width="1747" height="896" viewBox="0 0 1747 896" fill="none" stroke="#fb3838" strokeWidth="7" strokeLinecap="round" strokeLinejoin="round">
          <path d="M681 160L664 162L634 168L612 177L600 178H535L507 169L473 160L452 143L446 130L445 118L449 107H733L800 110L920 119L947 121H1070L1167 137L1200 151L1208 160L1202 165L1185 167L1115 180L1090 185L1083 188H1075L1066 191H993L973 194H770L750 192L700 183L670 181L640 180L617 178" />
          <path d="M665 601L658 588L648 567L646 551L650 546L668 541H700L735 546L840 567L845 572L844 580L835 586L795 594L775 599L740 596L700 588L675 579L655 568" />
          <path d="M1089 783L1052 766L1019 745L1001 737L997 731L1013 721L1040 714L1077 708H1160L1212 719L1272 738L1295 749L1309 770L1300 787L1279 799L1238 801L1200 797L1155 783L1133 773L1123 760L1122 752L1128 735L1135 726L1142 722" />
        </Marker>
      </Desktop>
    </>
  );
}
